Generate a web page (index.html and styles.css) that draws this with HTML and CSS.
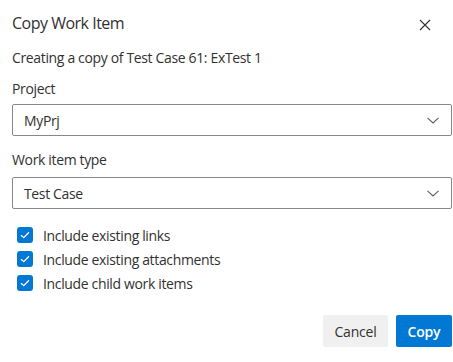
FILE: index.html
```html
<!DOCTYPE html>
<html lang="en">

<head>
    <meta charset="UTF-8">
    <meta name="viewport" content="width=device-width, initial-scale=1.0">
    <title>Copy Work Item</title>
    <link rel="stylesheet" href="styles.css">
</head>

<body>
<div class="dialog">
    <div class="header">
        <span class="dialog-title">Copy Work Item</span>
        <span class="close-button">
            <svg width="12" height="12" viewBox="0 0 12 12">
                <path d="M1 1 L11 11 M11 1 L1 11" stroke="#323130" stroke-width="1.1" fill="none"/>
            </svg>
        </span>
    </div>
    <div class="subtitle">Creating a copy of Test Case 61: ExTest 1</div>

    <label class="input-label">Project</label>
    <div class="dropdown">
        <span>MyPrj</span>
        <svg class="chevron" width="12" height="7" viewBox="0 0 12 7">
            <path d="M0.5 0.8 L6 6 L11.5 0.8" stroke="#605e5c" stroke-width="1.1" fill="none"/>
        </svg>
    </div>

    <label class="input-label second">Work item type</label>
    <div class="dropdown">
        <span>Test Case</span>
        <svg class="chevron" width="12" height="7" viewBox="0 0 12 7">
            <path d="M0.5 0.8 L6 6 L11.5 0.8" stroke="#605e5c" stroke-width="1.1" fill="none"/>
        </svg>
    </div>

    <div class="options">
        <div class="option">
            <span class="checkbox"><svg width="10" height="8" viewBox="0 0 10 8"><path d="M1 4.2 L3.7 6.6 L9 1.2" stroke="#fff" stroke-width="1.3" fill="none"/></svg></span>
            <span>Include existing links</span>
        </div>
        <div class="option">
            <span class="checkbox"><svg width="10" height="8" viewBox="0 0 10 8"><path d="M1 4.2 L3.7 6.6 L9 1.2" stroke="#fff" stroke-width="1.3" fill="none"/></svg></span>
            <span>Include existing attachments</span>
        </div>
        <div class="option">
            <span class="checkbox"><svg width="10" height="8" viewBox="0 0 10 8"><path d="M1 4.2 L3.7 6.6 L9 1.2" stroke="#fff" stroke-width="1.3" fill="none"/></svg></span>
            <span>Include child work items</span>
        </div>
    </div>

    <div class="footer">
        <button class="btn btn-cancel">Cancel</button>
        <button class="btn btn-copy">Copy</button>
    </div>
</div>
</body>

</html>
```

FILE: styles.css
```css
body {
    margin: 0;
    font-family: "Open Sans", "Segoe UI", sans-serif;
    font-size: 14px;
    letter-spacing: -0.35px;
    color: #323130;
    background: #ffffff;
}

.dialog {
    padding: 11px 1px 0 12px;
}

.header {
    display: flex;
    justify-content: space-between;
    align-items: center;
    height: 24px;
}

.dialog-title {
    font-size: 16px;
    font-weight: 500;
    line-height: 24px;
    letter-spacing: -0.5px;
}

.close-button {
    width: 32px;
    height: 32px;
    margin-right: 11px;
    display: flex;
    align-items: center;
    justify-content: center;
    margin-top: 4px;
}

.subtitle {
    margin-top: 13px;
    line-height: 20px;
}

.input-label {
    display: block;
    margin-top: 11px;
    margin-bottom: 5px;
    line-height: 20px;
}

.input-label.second {
    margin-top: 14px;
    margin-bottom: 7px;
}

.dropdown {
    height: 32px;
    box-sizing: border-box;
    border: 1px solid #8a8886;
    border-radius: 2px;
    display: flex;
    align-items: center;
    justify-content: space-between;
    padding: 0 12px 0 11px;
}

.options {
    margin-top: 14px;
    padding-left: 5px;
}

.option {
    display: flex;
    align-items: center;
    height: 24px;
}

.checkbox {
    width: 16px;
    height: 16px;
    border-radius: 3px;
    background: #0078d4;
    display: flex;
    align-items: center;
    justify-content: center;
    margin-right: 10px;
}

.footer {
    display: flex;
    justify-content: flex-end;
    gap: 8px;
    margin-top: 20px;
}

.btn {
    height: 32px;
    border: none;
    border-radius: 2px;
    font-family: inherit;
    font-size: 14px;
    letter-spacing: -0.2px;
    padding: 0 8px;
}

.btn-cancel {
    background: #f0f0f0;
    color: #323130;
    width: 65px;
}

.btn-copy {
    background: #0078d4;
    color: #ffffff;
    font-weight: 600;
    width: 56px;
}
```
